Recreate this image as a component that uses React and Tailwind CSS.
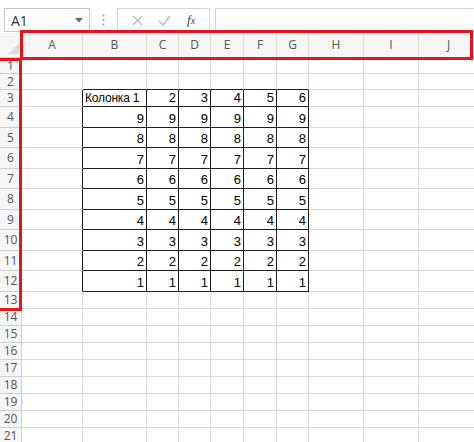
const cols = [
  { name: "A", w: 61 },
  { name: "B", w: 64 },
  { name: "C", w: 32 },
  { name: "D", w: 32 },
  { name: "E", w: 33 },
  { name: "F", w: 33 },
  { name: "G", w: 32 },
  { name: "H", w: 55 },
  { name: "I", w: 55 },
  { name: "J", w: 60 },
];

const rowHeights = [16, 16, 17, 21, 20, 21, 20, 21, 20, 21, 20, 21, 17, 17, 17, 17, 17, 17, 17, 17, 17];

function cellValue(r, c) {
  // r: 1-based row, c: 0-based column index
  if (r === 3) {
    if (c === 1) return "Колонка 1";
    if (c >= 2 && c <= 6) return String(c);
  }
  if (r >= 4 && r <= 12 && c >= 1 && c <= 6) return String(13 - r);
  return "";
}

function Cell({ r, c, w }) {
  const inTable = r >= 3 && r <= 12 && c >= 1 && c <= 6;
  const aboveTable = r === 2 && c >= 1 && c <= 6;
  const leftOfTable = r >= 3 && r <= 12 && c === 0;
  const value = cellValue(r, c);
  const isLabel = r === 3 && c === 1;
  return (
    <div
      style={{ width: w }}
      className={`shrink-0 h-full flex items-end pb-[2px] px-[2px] border-r border-b ${
        inTable
          ? "border-[#1e1e1e]"
          : aboveTable
          ? "border-r-[#dadada] border-b-[#1e1e1e]"
          : leftOfTable
          ? "border-r-[#1e1e1e] border-b-[#dadada]"
          : "border-[#dadada]"
      } ${isLabel ? "justify-start" : "justify-end"}`}
    >
      <span
        className={`leading-none text-black whitespace-nowrap ${
          isLabel ? "text-[12px] tracking-[-0.2px]" : "text-[13px]"
        }`}
      >
        {value}
      </span>
    </div>
  );
}

export default function App() {
  return (
    <div className="relative w-[474px] h-[442px] overflow-hidden bg-white font-['Liberation_Sans',sans-serif]">
      {/* formula bar */}
      <div className="h-[33px] flex items-start pt-[8px] pl-[4px]">
        <div className="w-[86px] h-[24px] border border-[#c6c6c6] flex items-center justify-between pl-[6px] pr-[6px]">
          <span className="text-[14px] text-[#333] font-['Open_Sans',sans-serif]">A1</span>
          <svg width="8" height="5" viewBox="0 0 8 5">
            <path d="M0 0 H8 L4 4.5 Z" fill="#6b6b6b" />
          </svg>
        </div>
        <div className="w-[27px] h-[24px] flex items-center justify-center">
          <svg width="3" height="12" viewBox="0 0 3 12">
            <circle cx="1.5" cy="1.5" r="1" fill="#a0a0a0" />
            <circle cx="1.5" cy="6" r="1" fill="#a0a0a0" />
            <circle cx="1.5" cy="10.5" r="1" fill="#a0a0a0" />
          </svg>
        </div>
        <div className="w-[93px] h-[24px] border border-[#d6d6d6] flex items-center justify-around px-[6px]">
          <svg width="11" height="11" viewBox="0 0 11 11">
            <path d="M1 1 L10 10 M10 1 L1 10" stroke="#b8b8b8" strokeWidth="1.2" />
          </svg>
          <svg width="13" height="11" viewBox="0 0 13 11">
            <path d="M1 6 L5 10 L12 1" stroke="#b8b8b8" strokeWidth="1.4" fill="none" />
          </svg>
          <span className="text-[13px] italic text-[#444] font-['Liberation_Serif',serif]">
            f<span className="text-[10px]">x</span>
          </span>
        </div>
        <div className="ml-[5px] flex-1 h-[24px] border border-[#d6d6d6] border-r-0" />
      </div>

      {/* column header row */}
      <div className="flex h-[25px] bg-[#f6f6f6] border-b border-[#d0d0d0]">
        <div className="w-[22px] shrink-0 h-full border-r border-[#d0d0d0] relative">
          <svg className="absolute right-[2px] bottom-[3px]" width="11" height="11" viewBox="0 0 11 11">
            <path d="M11 0 V11 H0 Z" fill="#dcdcdc" />
          </svg>
        </div>
        {cols.map((c) => (
          <div
            key={c.name}
            style={{ width: c.w }}
            className="shrink-0 h-full border-r border-[#dadada] flex items-center justify-center text-[12px] text-[#555] font-['Open_Sans',sans-serif]"
          >
            {c.name}
          </div>
        ))}
      </div>

      {/* rows */}
      {rowHeights.map((h, i) => {
        const r = i + 1;
        return (
          <div key={r} className="flex" style={{ height: h }}>
            <div className="w-[22px] shrink-0 h-full bg-[#f6f6f6] border-r border-b border-[#d0d0d0] flex items-center justify-center text-[12px] text-[#555] font-['Open_Sans',sans-serif]">
              {r}
            </div>
            {cols.map((c, ci) => (
              <Cell key={c.name} r={r} c={ci} w={c.w} />
            ))}
          </div>
        );
      })}

      {/* red annotation frames */}
      <div className="absolute left-[20px] top-[30px] w-[453px] h-[30px] border-[3px] border-[#e8141b]" />
      <div className="absolute left-[-3px] top-[58px] w-[25px] h-[253px] border-[3px] border-[#e8141b]" />
    </div>
  );
}
